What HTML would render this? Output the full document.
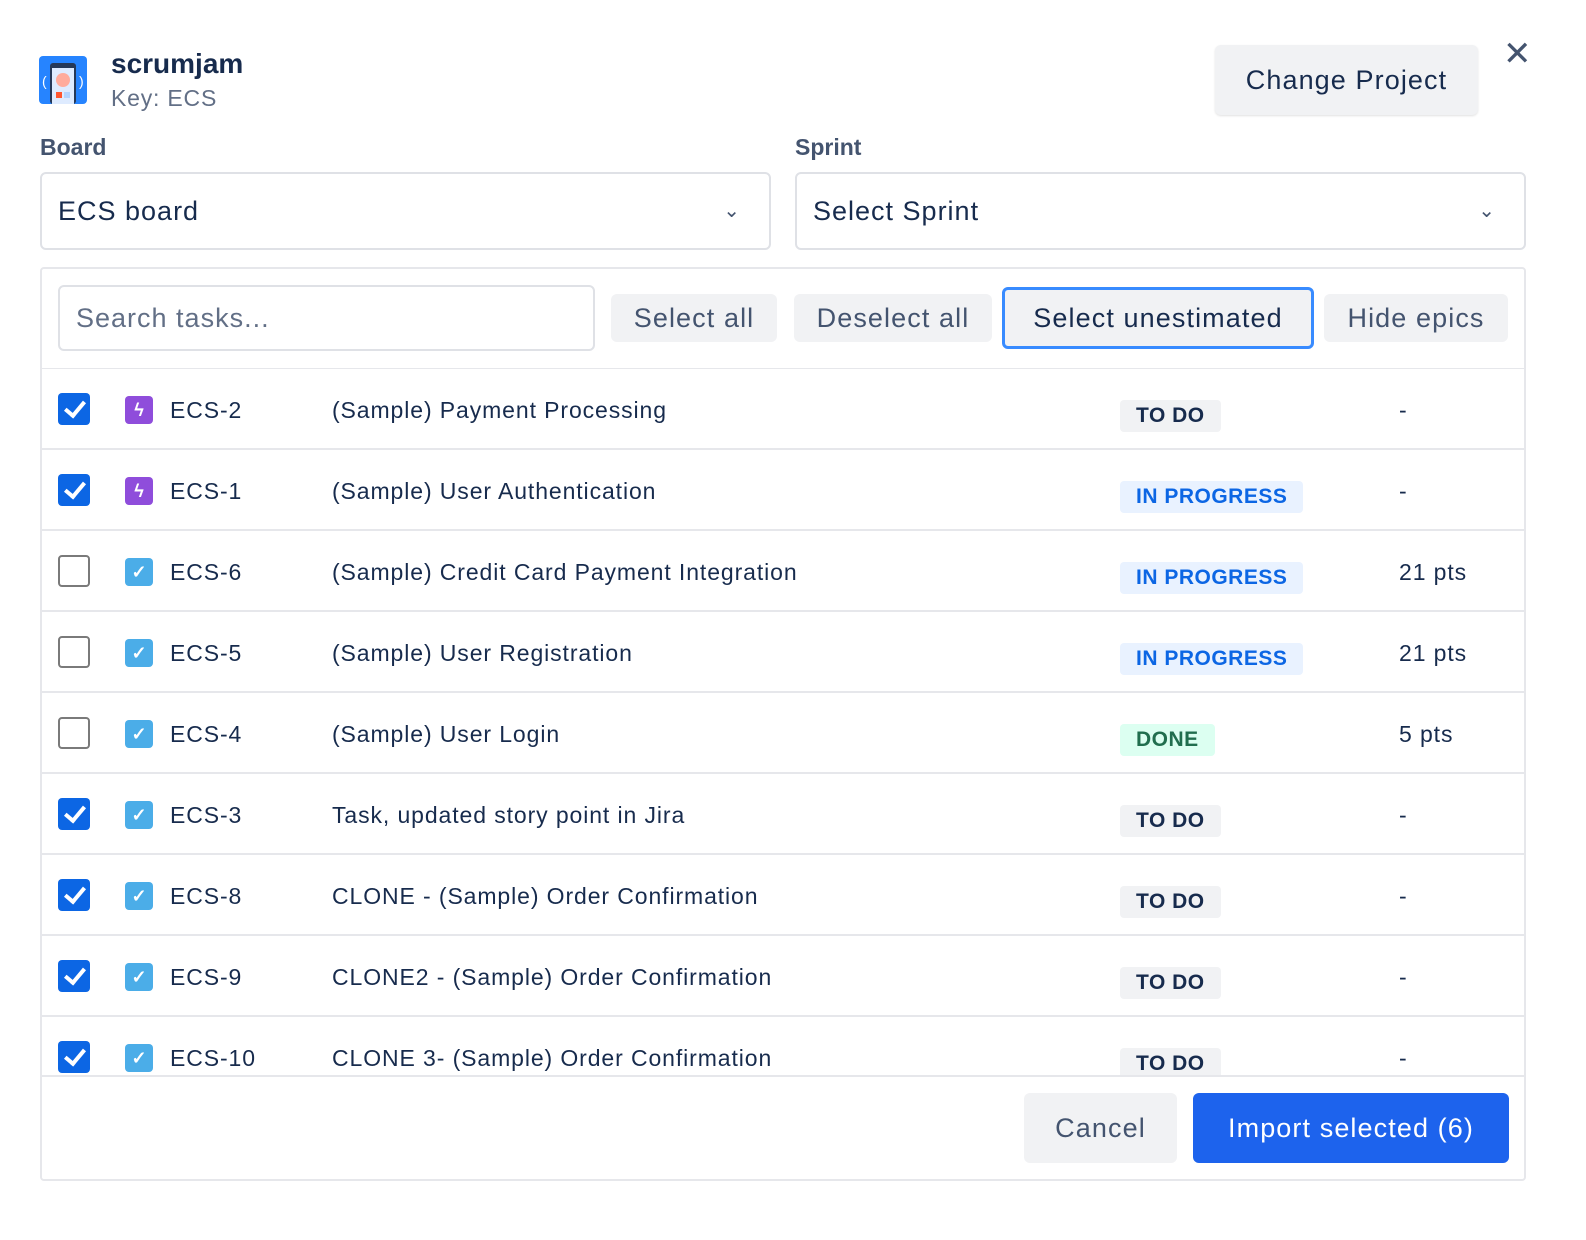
<!DOCTYPE html>
<html><head><style>
*{box-sizing:border-box;margin:0;padding:0}
body{width:1586px;height:1240px;background:#fff;font-family:"Liberation Sans",sans-serif;color:#172b4d;position:relative;overflow:hidden}
.abs{position:absolute}
.btn{position:absolute;background:#f1f2f4;border-radius:6px;font-size:27px;color:#44546f;display:flex;align-items:center;justify-content:center;letter-spacing:1.1px}
.sel{position:absolute;border:2px solid #dfe1e6;border-radius:6px;height:78px;top:172px;font-size:27px;color:#172b4d;padding-left:16px;display:flex;align-items:center;letter-spacing:1px}
.row{position:absolute;left:42px;width:1482px;height:81px;border-top:2px solid #e6e7eb;font-size:23px;color:#172b4d;letter-spacing:.9px}
.row>*{position:absolute}
.cb{left:16px;top:24px;width:32px;height:32px;border-radius:4px}
.cb.on{background:#0c66e4}
.cb.off{border:2px solid #7a7a7a}
.ic{left:83px;top:27px;width:28px;height:28px;border-radius:4px}
.key{left:128px;top:28px}
.sum{left:290px;top:28px}
.badge{left:1078px;top:31px;height:32px;padding:0 16px;border-radius:4px;font-weight:bold;font-size:21px;line-height:32px;letter-spacing:.5px}
.todo{background:#f1f2f4;color:#172b4d}
.prog{background:#e9f2ff;color:#0c66e4}
.done{background:#dcfff1;color:#216e4e}
.pts{left:1357px;top:28px}
</style></head><body>
<svg class="abs" style="left:39px;top:56px" width="48" height="48" viewBox="0 0 48 48"><rect width="48" height="48" rx="4" fill="#2684ff"/><rect x="11" y="7" width="26" height="41" rx="3" fill="#253858"/><rect x="13" y="12" width="22" height="36" fill="#deebff"/><circle cx="24" cy="24" r="7" fill="#ffab9c"/><rect x="17" y="36" width="6" height="6" fill="#ff5630"/><rect x="25" y="36" width="6" height="6" fill="#b3d4ff"/><text x="3" y="30" font-size="14" fill="#fff">(</text><text x="40" y="30" font-size="14" fill="#fff">)</text></svg>
<div class="abs" style="left:111px;top:48px;font-size:28px;font-weight:bold;color:#172b4d">scrumjam</div>
<div class="abs" style="left:111px;top:85px;font-size:23px;color:#626f86;letter-spacing:.8px">Key: ECS</div>
<div class="btn" style="left:1215px;top:45px;width:263px;height:70px;color:#172b4d;box-shadow:0 1px 2px rgba(0,0,0,.12)">Change Project</div>
<div class="abs" style="left:1503px;top:34px;font-size:34px;color:#44546f">✕</div>
<div class="abs" style="left:40px;top:134px;font-size:23px;font-weight:bold;color:#44546f">Board</div>
<div class="abs" style="left:795px;top:134px;font-size:23px;font-weight:bold;color:#44546f">Sprint</div>
<div class="sel" style="left:40px;width:731px">ECS board<span class="abs" style="right:28px;top:24px;font-size:20px;color:#44546f">⌄</span></div>
<div class="sel" style="left:795px;width:731px">Select Sprint<span class="abs" style="right:28px;top:24px;font-size:20px;color:#44546f">⌄</span></div>
<div class="abs" style="left:40px;top:267px;width:1486px;height:914px;border:2px solid #e6e7eb;border-radius:4px"></div>
<div class="abs" style="left:58px;top:285px;width:537px;height:66px;border:2px solid #dfe1e6;border-radius:6px;font-size:27px;color:#626f86;padding:16px 16px;letter-spacing:1px">Search tasks...</div>
<div class="btn" style="left:611px;top:294px;width:166px;height:48px">Select all</div>
<div class="btn" style="left:794px;top:294px;width:198px;height:48px">Deselect all</div>
<div class="btn" style="left:1002px;top:287px;width:312px;height:62px;background:#f1f2f4;border:3px solid #388bff;color:#172b4d">Select unestimated</div>
<div class="btn" style="left:1324px;top:294px;width:184px;height:48px">Hide epics</div>

<div class="abs" style="left:42px;top:368px;width:1482px;height:707px;overflow:hidden">
<div style="position:relative;left:-42px;top:-368px">
<div class="row" style="top:367px"><div class="cb on"></div><div class="ic" style="background:#8f4ddb"></div><div class="key">ECS-2</div><div class="sum">(Sample) Payment Processing</div><div class="badge todo">TO DO</div><div class="pts">-</div></div>
<div class="row" style="top:448px"><div class="cb on"></div><div class="ic" style="background:#8f4ddb"></div><div class="key">ECS-1</div><div class="sum">(Sample) User Authentication</div><div class="badge prog">IN PROGRESS</div><div class="pts">-</div></div>
<div class="row" style="top:529px"><div class="cb off"></div><div class="ic" style="background:#4bade8"></div><div class="key">ECS-6</div><div class="sum">(Sample) Credit Card Payment Integration</div><div class="badge prog">IN PROGRESS</div><div class="pts">21 pts</div></div>
<div class="row" style="top:610px"><div class="cb off"></div><div class="ic" style="background:#4bade8"></div><div class="key">ECS-5</div><div class="sum">(Sample) User Registration</div><div class="badge prog">IN PROGRESS</div><div class="pts">21 pts</div></div>
<div class="row" style="top:691px"><div class="cb off"></div><div class="ic" style="background:#4bade8"></div><div class="key">ECS-4</div><div class="sum">(Sample) User Login</div><div class="badge done">DONE</div><div class="pts">5 pts</div></div>
<div class="row" style="top:772px"><div class="cb on"></div><div class="ic" style="background:#4bade8"></div><div class="key">ECS-3</div><div class="sum">Task, updated story point in Jira</div><div class="badge todo">TO DO</div><div class="pts">-</div></div>
<div class="row" style="top:853px"><div class="cb on"></div><div class="ic" style="background:#4bade8"></div><div class="key">ECS-8</div><div class="sum">CLONE - (Sample) Order Confirmation</div><div class="badge todo">TO DO</div><div class="pts">-</div></div>
<div class="row" style="top:934px"><div class="cb on"></div><div class="ic" style="background:#4bade8"></div><div class="key">ECS-9</div><div class="sum">CLONE2 - (Sample) Order Confirmation</div><div class="badge todo">TO DO</div><div class="pts">-</div></div>
<div class="row" style="top:1015px"><div class="cb on"></div><div class="ic" style="background:#4bade8"></div><div class="key">ECS-10</div><div class="sum">CLONE 3- (Sample) Order Confirmation</div><div class="badge todo">TO DO</div><div class="pts">-</div></div>
</div></div>
<div class="abs" style="left:42px;top:1075px;width:1482px;height:2px;background:#e6e7eb"></div>
<div class="btn" style="left:1024px;top:1093px;width:153px;height:70px;color:#44546f">Cancel</div>
<div class="btn" style="left:1193px;top:1093px;width:316px;height:70px;background:#1d63ed;color:#fff">Import selected (6)</div>
<style>
.cb.on::after{content:"";position:absolute;left:11px;top:4px;width:8px;height:16px;border:solid #fff;border-width:0 4px 4px 0;transform:rotate(40deg)}
.ic::after{position:absolute;left:0;top:0;width:28px;height:28px;text-align:center;line-height:28px;color:#fff;font-size:18px;font-weight:bold;letter-spacing:0}
.ic[style*="8f4ddb"]::after{content:"ϟ"}
.ic[style*="4bade8"]::after{content:"✓"}
</style>
</body></html>
